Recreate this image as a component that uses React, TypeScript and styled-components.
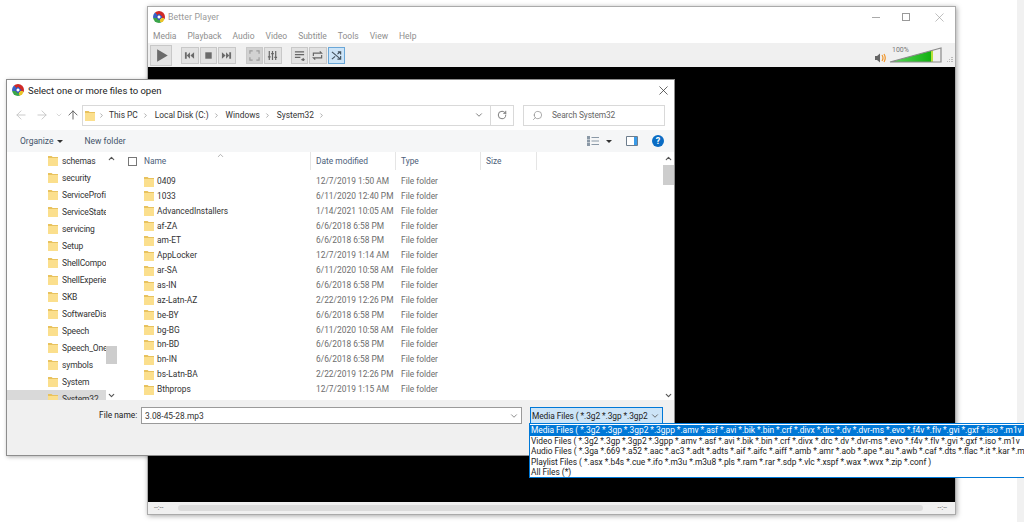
import styled, { createGlobalStyle } from 'styled-components';
import { ArrowLeft, ArrowRight, ArrowUp, ChevronDown, ChevronRight, ChevronUp, RotateCw, Search, X } from 'lucide-react';

const Global = createGlobalStyle`
    html, body { margin: 0; padding: 0; background: #fff; overflow: hidden; }
    body { font-family: Roboto, "Open Sans", sans-serif; }
    * { box-sizing: border-box; }
`;

const Desktop = styled.div`
    position: relative;
    width: 1024px;
    height: 522px;
    overflow: hidden;
    display: flex;
    justify-content: flex-end;
`;
const DesktopEdge = styled.div`
    width: 7px;
    background: #f1f1f1;
`;

/* player window */
const PlayerWindow = styled.div`
    position: absolute;
    left: 147px;
    top: 6px;
    width: 809px;
    height: 509px;
    display: flex;
    flex-direction: column;
    background: #fff;
    border: 1px solid #aaa;
    box-shadow: 1px 1px 5px rgba(0,0,0,.35);
`;
const PlayerTitle = styled.div`
    height: 20px;
    padding-left: 5px;
    display: flex;
    align-items: center;
    gap: 3px;
    font-size: 8.8px;
    color: #9a9a9a;
    letter-spacing: .1px;
`;
const CaptionGroup = styled.div`
    margin-left: auto;
    display: flex;
    align-items: center;
    gap: 22px;
    padding-right: 8px;
    color: #999;
`;
const CaptionMin = styled.span`
    width: 8px;
    height: 1px;
    background: #aaa;
`;
const CaptionMax = styled.span`
    width: 8px;
    height: 8px;
    border: 1px solid #999;
`;
const Logo = styled.span<{ $size: number }>`
    width: ${p => p.$size}px;
    height: ${p => p.$size}px;
    border-radius: 50%;
    flex: none;
    background: radial-gradient(circle, #fff 0 18%, #3c55b8 19% 32%, transparent 33%),
        conic-gradient(#cf2a27 0 30%, #e8c42a 30% 45%, #3aa54a 45% 72%, #3a62c4 72% 88%, #cf2a27 88%);
`;
const MenuBar = styled.div`
    height: 16px;
    padding: 2px 0 0 5px;
    display: flex;
    align-items: center;
    gap: 11px;
    font-size: 8.5px;
    color: #8e8e8e;
`;
const ToolBar = styled.div`
    height: 24px;
    padding: 0 2px;
    background: #f0f0f0;
    display: flex;
    align-items: center;
`;
const ToolGroup = styled.div<{ $gap?: number }>`
    display: flex;
    gap: 1px;
    margin-right: ${p => p.$gap ?? 9}px;
`;
const ToolButton = styled.div<{ $wide?: boolean; $active?: boolean; $dim?: boolean }>`
    width: ${p => (p.$wide ? 22 : 17.5)}px;
    height: ${p => (p.$wide ? 21 : 17)}px;
    display: flex;
    align-items: center;
    justify-content: center;
    border: 1px solid ${p => (p.$active ? '#6aa7d8' : '#c8c8c8')};
    background: ${p => (p.$active ? '#cde4f7' : p.$dim ? '#d2d2d2' : '#e2e2e2')};
    color: #6a6a6a;
`;
const VolumeArea = styled.div`
    margin-left: auto;
    display: flex;
    align-items: flex-end;
    height: 22px;
    padding-bottom: 3px;
`;
const VolumeRamp = styled.div`
    position: relative;
    width: 53px;
    height: 16px;
    margin: 0 5px 0 3px;
`;
const VolumeLabel = styled.span`
    position: absolute;
    left: 3px;
    top: -1px;
    font-size: 7px;
    color: #777;
`;
const Video = styled.div`
    flex: 1;
    background: #000;
`;
const StatusBar = styled.div`
    height: 12px;
    background: #f0f0f0;
    display: flex;
    align-items: center;
    padding: 0 8px 0 6px;
    gap: 15px;
    font-size: 7px;
    color: #666;
`;
const SeekTrack = styled.div`
    flex: 1;
    height: 6px;
    background: #dcdcdc;
    border-radius: 3px;
`;

/* file dialog */
const DialogWindow = styled.div`
    position: absolute;
    left: 6px;
    top: 79px;
    width: 669px;
    height: 377px;
    display: flex;
    flex-direction: column;
    background: #fff;
    border: 1px solid #8d8d8d;
    box-shadow: 1px 1px 4px rgba(0,0,0,.3);
`;
const DialogTitle = styled.div`
    height: 20px;
    padding: 0 3px 0 5px;
    display: flex;
    align-items: center;
    gap: 4px;
    font-size: 9.5px;
    color: #222;
`;
const CloseSpot = styled.span`
    margin-left: auto;
    display: flex;
    color: #333;
`;
const AddressRow = styled.div`
    height: 30px;
    display: flex;
    align-items: center;
`;
const NavIcons = styled.div`
    width: 75px;
    padding-left: 3px;
    display: grid;
    grid-template-columns: 21px 21px 14px 14px;
    justify-items: center;
    align-items: center;
    color: #c4c4c4;
`;
const AddressBox = styled.div`
    width: 432px;
    height: 21px;
    display: flex;
    align-items: center;
    padding-left: 2px;
    border: 1px solid #d9d9d9;
    font-size: 8.4px;
    color: #333;
`;
const Crumb = styled.span<{ $lead?: boolean }>`
    display: flex;
    align-items: center;
    gap: ${p => (p.$lead ? 3 : 4.5)}px;
    margin-right: ${p => (p.$lead ? 4 : 5.5)}px;
    svg { color: #777; }
`;
const AddressEnd = styled.div`
    margin-left: auto;
    height: 100%;
    display: flex;
    align-items: center;
    color: #666;
`;
const RefreshCell = styled.span`
    width: 23px;
    height: 100%;
    margin-left: 6px;
    display: flex;
    align-items: center;
    justify-content: center;
    border-left: 1px solid #d9d9d9;
`;
const SearchBox = styled.div`
    width: 142px;
    height: 21px;
    margin-left: 9px;
    padding-left: 8px;
    display: flex;
    align-items: center;
    gap: 9px;
    border: 1px solid #d9d9d9;
    font-size: 8.4px;
    letter-spacing: -.12px;
    color: #666;
    svg { color: #888; transform: scaleX(-1); }
`;
const CommandBar = styled.div`
    height: 22px;
    padding: 0 10px 0 13px;
    display: flex;
    align-items: center;
    background: #f5f6f7;
    font-size: 8.5px;
    color: #44546a;
`;
const Organize = styled.span`
    display: flex;
    align-items: center;
    gap: 4px;
    margin-right: 21px;
`;
const Caret = styled.span`
    border-left: 3px solid transparent;
    border-right: 3px solid transparent;
    border-top: 3px solid #333;
`;
const CommandRight = styled.div`
    margin-left: auto;
    display: flex;
    align-items: center;
    gap: 14px;
`;
const ViewGroup = styled.span`
    display: flex;
    align-items: center;
    gap: 7px;
`;
const HelpBadge = styled.span`
    width: 12px;
    height: 12px;
    border-radius: 50%;
    background: #0a6cc4;
    color: #fff;
    font-size: 9px;
    font-weight: 700;
    line-height: 12px;
    text-align: center;
`;
const Body = styled.div`
    height: 248px;
    display: flex;
    overflow: hidden;
`;
const NavPane = styled.div`
    position: relative;
    width: 110px;
    flex: none;
    overflow: hidden;
`;
const NavItem = styled.div<{ $selected?: boolean }>`
    height: 17px;
    width: 99px;
    padding-left: 41px;
    display: flex;
    align-items: center;
    gap: 4px;
    font-size: 8.5px;
    letter-spacing: -.14px;
    color: #333;
    white-space: nowrap;
    background: ${p => (p.$selected ? '#d9d9d9' : 'transparent')};
    svg { flex: none; }
`;
const ScrollBar = styled.div`
    position: absolute;
    top: 0;
    right: 0;
    bottom: 0;
    width: 11px;
    background: #fff;
`;
const ScrollArrow = styled.span<{ $bottom?: boolean }>`
    position: absolute;
    left: 1px;
    ${p => (p.$bottom ? 'bottom: 0;' : 'top: 2px;')}
    display: flex;
    color: #555;
`;
const ScrollThumb = styled.span<{ $top: number; $height: number }>`
    position: absolute;
    left: 0;
    right: 0;
    top: ${p => p.$top}px;
    height: ${p => p.$height}px;
    background: #cdcdcd;
`;
const ListPane = styled.div`
    position: relative;
    flex: 1;
    overflow: hidden;
    padding-left: 11px;
`;
const HeaderRow = styled.div`
    position: relative;
    height: 18px;
    display: grid;
    grid-template-columns: 183px 85px 85px 56px;
    font-size: 8.4px;
    color: #4c607a;
`;
const HeaderCell = styled.div<{ $first?: boolean }>`
    display: flex;
    align-items: center;
    gap: 6px;
    padding-left: ${p => (p.$first ? 0 : 5)}px;
    height: 18px;
    border-right: 1px solid #e5e5e5;
`;
const CheckBox = styled.span`
    width: 9px;
    height: 9px;
    border: 1px solid #777;
    margin-right: 1px;
`;
const SortMark = styled.span`
    position: absolute;
    left: 88px;
    top: -1px;
    display: flex;
    color: #999;
`;
const FileRows = styled.div`
    padding-top: 3.6px;
`;
const FileRow = styled.div`
    height: 14.86px;
    display: grid;
    grid-template-columns: 183px 85px 85px;
    align-items: center;
    font-size: 8.4px;
    color: #6d6d6d;
    white-space: nowrap;
`;
const FileName = styled.span`
    display: flex;
    align-items: center;
    gap: 3px;
    padding-left: 16px;
    color: #333;
`;
const FileCell = styled.span`
    padding-left: 5px;
`;
const Footer = styled.div`
    flex: 1;
    background: #f0f0f0;
    padding: 7px 0 0 92px;
    display: flex;
    align-items: flex-start;
    font-size: 8.4px;
    color: #222;
`;
const FieldLabel = styled.span`
    width: 42px;
    height: 17px;
    line-height: 17px;
    white-space: nowrap;
`;
const NameInput = styled.div`
    width: 381px;
    height: 17px;
    padding-left: 3px;
    display: flex;
    align-items: center;
    background: #fff;
    border: 1px solid #9a9a9a;
    color: #333;
`;
const NameArrow = styled.span`
    margin-left: auto;
    padding: 0 2px;
    display: flex;
    color: #777;
`;
const FilterCombo = styled.div`
    width: 133px;
    height: 17px;
    margin-left: 8px;
    padding: 0 2px 0 1px;
    display: flex;
    align-items: center;
    justify-content: space-between;
    background: #cce4f7;
    border: 1px solid #0078d7;
    font-size: 8.4px;
    letter-spacing: -.08px;
    white-space: nowrap;
`;
const FilterMenu = styled.div`
    position: absolute;
    left: 529px;
    top: 423px;
    width: 520px;
    height: 55px;
    padding: 1px 0;
    background: #fff;
    border: 1px solid #0078d7;
    font-size: 8.4px;
    letter-spacing: -.03px;
    color: #222;
`;
const FilterOption = styled.div<{ $selected?: boolean }>`
    height: 10.6px;
    line-height: 10.6px;
    padding-left: 1px;
    white-space: nowrap;
    background: ${p => (p.$selected ? '#0078d7' : 'transparent')};
    color: ${p => (p.$selected ? '#fff' : '#222')};
`;

const Glyph = ({ d, size = 11, fill = 'currentColor', stroke = 'none' }: { d: string; size?: number; fill?: string; stroke?: string }) => (
    <svg width={size} height={size} viewBox="0 0 12 12" fill={fill} stroke={stroke} strokeWidth={stroke === 'none' ? 0 : 1.3}>
        <path d={d} />
    </svg>
);

const Folder = () => (
    <svg width="10" height="11" viewBox="0 0 10 11">
        <path d="M0 1h3.5l1 1H10v9H0z" fill="#fbdf8d" />
        <path d="M0 1h3.5l1 1H10v1H0z" fill="#e8c25e" />
    </svg>
);

const navFolders = ['schemas', 'security', 'ServiceProfi', 'ServiceState', 'servicing', 'Setup', 'ShellCompo', 'ShellExperie', 'SKB', 'SoftwareDis', 'Speech', 'Speech_One', 'symbols', 'System', 'System32'];

const files = [
    ['0409', '12/7/2019 1:50 AM'],
    ['1033', '6/11/2020 12:40 PM'],
    ['AdvancedInstallers', '1/14/2021 10:05 AM'],
    ['af-ZA', '6/6/2018 6:58 PM'],
    ['am-ET', '6/6/2018 6:58 PM'],
    ['AppLocker', '12/7/2019 1:14 AM'],
    ['ar-SA', '6/11/2020 10:58 AM'],
    ['as-IN', '6/6/2018 6:58 PM'],
    ['az-Latn-AZ', '2/22/2019 12:26 PM'],
    ['be-BY', '6/6/2018 6:58 PM'],
    ['bg-BG', '6/11/2020 10:58 AM'],
    ['bn-BD', '6/6/2018 6:58 PM'],
    ['bn-IN', '6/6/2018 6:58 PM'],
    ['bs-Latn-BA', '2/22/2019 12:26 PM'],
    ['Bthprops', '12/7/2019 1:15 AM'],
];

const common = '*.3g2 *.3gp *.3gp2 *.3gpp *.amv *.asf *.avi *.bik *.bin *.crf *.divx *.drc *.dv *.dvr-ms *.evo *.f4v *.flv *.gvi *.gxf *.iso *.m1v';
const filters = [
    `Media Files ( ${common}`,
    `Video Files ( ${common}`,
    'Audio Files ( *.3ga *.669 *.a52 *.aac *.ac3 *.adt *.adts *.aif *.aifc *.aiff *.amb *.amr *.aob *.ape *.au *.awb *.caf *.dts *.flac *.it *.kar *.m4a',
    'Playlist Files ( *.asx *.b4s *.cue *.ifo *.m3u *.m3u8 *.pls *.ram *.rar *.sdp *.vlc *.xspf *.wax *.wvx *.zip *.conf )',
    'All Files  (*)',
];

const menus = ['Media', 'Playback', 'Audio', 'Video', 'Subtitle', 'Tools', 'View', 'Help'];
const crumbs = ['This PC', 'Local Disk (C:)', 'Windows', 'System32'];

const App = () => {
    return (
        <Desktop>
            <Global />
            <DesktopEdge />
            <PlayerWindow>
                <PlayerTitle>
                    <Logo $size={12} />
                    <span>Better Player</span>
                    <CaptionGroup>
                        <CaptionMin />
                        <CaptionMax />
                        <X size={15} strokeWidth={1} />
                    </CaptionGroup>
                </PlayerTitle>
                <MenuBar>
                    {menus.map(m => <span key={m}>{m}</span>)}
                </MenuBar>
                <ToolBar>
                    <ToolGroup>
                        <ToolButton $wide><Glyph size={15} d="M2.5 1 11 6l-8.500 5z" /></ToolButton>
                    </ToolGroup>
                    <ToolGroup $gap={10}>
                        <ToolButton><Glyph d="M1 2.500h2v7H1zM6.500 2.500v7L3 6zM11 2.500v7L7 6z" /></ToolButton>
                        <ToolButton><Glyph d="M2.500 2.500h7v7h-7z" /></ToolButton>
                        <ToolButton><Glyph d="M1 2.500v7L5 6zM5.500 2.500v7L9 6zM9 2.500h2v7H9z" /></ToolButton>
                    </ToolGroup>
                    <ToolGroup>
                        <ToolButton $dim><Glyph fill="none" stroke="#9c9c9c" d="M1 4V1h3M8 1h3v3M11 8v3H8M4 11H1V8" /></ToolButton>
                        <ToolButton><Glyph fill="none" stroke="#666" d="M2.500 1v10M6 1v10M9.500 1v10M1 7.500h3M4.500 4h3M8 8h3" /></ToolButton>
                    </ToolGroup>
                    <ToolGroup $gap={0}>
                        <ToolButton><Glyph fill="none" stroke="#666" d="M1 2h10M1 5h10M1 8h6M8 10.500h2.500M9.500 9l1.500 1.500L9.500 12" /></ToolButton>
                        <ToolButton><Glyph fill="none" stroke="#666" d="M1.500 6.500V3.500h9L8.500 1.500M10.500 5.500v3h-9l2 2" /></ToolButton>
                        <ToolButton $active><Glyph fill="none" stroke="#44525e" d="M1 2l9.500 8M10.500 6.500V10H7M1 10l3.500-3M7 4.500 10.500 2M7.500 2h3v3" /></ToolButton>
                    </ToolGroup>
                    <VolumeArea>
                        <svg width="11" height="10" viewBox="0 0 11 10">
                            <path d="M0 3h2l3-2.500v9L2 7H0z" fill="#666" />
                            <path d="M7 2q2 3 0 6M9 1q2.500 4 0 8" fill="none" stroke="#f0952a" strokeWidth="1.200" />
                        </svg>
                        <VolumeRamp>
                            <svg width="53" height="16" viewBox="0 0 53 16">
                                <defs>
                                    <linearGradient id="volumeFill" x1="0" x2="1" y1="0" y2="0">
                                        <stop offset="0" stopColor="#5fdc5f" />
                                        <stop offset="1" stopColor="#12b012" />
                                    </linearGradient>
                                </defs>
                                <path d="M1 15 42 3.800V15z" fill="url(#volumeFill)" />
                                <path d="M42 3.800 44 3.300V15h-2z" fill="#b6e03a" />
                                <path d="M1 15 52 1v14z" fill="none" stroke="#8a8a8a" strokeWidth="1.200" />
                            </svg>
                            <VolumeLabel>100%</VolumeLabel>
                        </VolumeRamp>
                        <svg width="6" height="6" viewBox="0 0 6 6" fill="#bbb">
                            <path d="M4 0h2v1H4zM2 2h1v1H2zM4 2h2v1H4zM0 4h1v1H0zM2 4h1v1H2zM4 4h2v1H4z" />
                        </svg>
                    </VolumeArea>
                </ToolBar>
                <Video />
                <StatusBar>
                    <span>--:--</span>
                    <SeekTrack />
                    <span>--:--</span>
                </StatusBar>
            </PlayerWindow>

            <DialogWindow>
                <DialogTitle>
                    <Logo $size={12} />
                    <span>Select one or more files to open</span>
                    <CloseSpot><X size={15} strokeWidth={1.2} /></CloseSpot>
                </DialogTitle>
                <AddressRow>
                    <NavIcons>
                        <ArrowLeft size={14} strokeWidth={1.5} />
                        <ArrowRight size={14} strokeWidth={1.5} />
                        <ChevronDown size={8} />
                        <ArrowUp size={14} strokeWidth={1.7} color="#666" />
                    </NavIcons>
                    <AddressBox>
                        <Crumb $lead><Folder /><ChevronRight size={7} /></Crumb>
                        {crumbs.map(c => <Crumb key={c}>{c}<ChevronRight size={7} /></Crumb>)}
                        <AddressEnd>
                            <ChevronDown size={10} />
                            <RefreshCell><RotateCw size={10} /></RefreshCell>
                        </AddressEnd>
                    </AddressBox>
                    <SearchBox><Search size={11} strokeWidth={1.5} />Search System32</SearchBox>
                </AddressRow>
                <CommandBar>
                    <Organize>Organize <Caret /></Organize>
                    <span>New folder</span>
                    <CommandRight>
                        <ViewGroup>
                            <svg width="12" height="10" viewBox="0 0 12 10" fill="#8a98a6">
                                <path d="M0 0h3v3H0zM0 3.500h3v3H0zM0 7h3v3H0zM4.500 1H12v1H4.500zM4.500 4.500H12v1H4.500zM4.500 8H12v1H4.500z" />
                            </svg>
                            <Caret />
                        </ViewGroup>
                        <svg width="12" height="10" viewBox="0 0 12 10">
                            <path d="M.5.500h11v9H.5z" fill="#fff" stroke="#6d7d8d" />
                            <path d="M8 1h3v8H8z" fill="#3a9be8" />
                        </svg>
                        <HelpBadge>?</HelpBadge>
                    </CommandRight>
                </CommandBar>
                <Body>
                    <NavPane>
                        {navFolders.map(n => (
                            <NavItem key={n} $selected={n === 'System32'}><Folder />{n}</NavItem>
                        ))}
                        <ScrollBar>
                            <ScrollArrow><ChevronUp size={9} strokeWidth={3} /></ScrollArrow>
                            <ScrollThumb $top={194} $height={18} />
                            <ScrollArrow $bottom><ChevronDown size={9} strokeWidth={3} /></ScrollArrow>
                        </ScrollBar>
                    </NavPane>
                    <ListPane>
                        <HeaderRow>
                            <HeaderCell $first><CheckBox />Name</HeaderCell>
                            <HeaderCell>Date modified</HeaderCell>
                            <HeaderCell>Type</HeaderCell>
                            <HeaderCell>Size</HeaderCell>
                            <SortMark><ChevronUp size={9} /></SortMark>
                        </HeaderRow>
                        <FileRows>
                            {files.map(([name, date]) => (
                                <FileRow key={name}>
                                    <FileName><Folder />{name}</FileName>
                                    <FileCell>{date}</FileCell>
                                    <FileCell>File folder</FileCell>
                                </FileRow>
                            ))}
                        </FileRows>
                        <ScrollBar>
                            <ScrollArrow><ChevronUp size={9} strokeWidth={3} /></ScrollArrow>
                            <ScrollThumb $top={13} $height={20} />
                            <ScrollArrow $bottom><ChevronDown size={9} strokeWidth={3} /></ScrollArrow>
                        </ScrollBar>
                    </ListPane>
                </Body>
                <Footer>
                    <FieldLabel>File name:</FieldLabel>
                    <NameInput>3.08-45-28.mp3<NameArrow><ChevronDown size={10} /></NameArrow></NameInput>
                    <FilterCombo>Media Files ( *.3g2 *.3gp *.3gp2<ChevronDown size={10} color="#555" /></FilterCombo>
                </Footer>
            </DialogWindow>

            <FilterMenu>
                {filters.map((f, i) => <FilterOption key={f} $selected={i === 0}>{f}</FilterOption>)}
            </FilterMenu>
        </Desktop>
    );
};

export default App;
